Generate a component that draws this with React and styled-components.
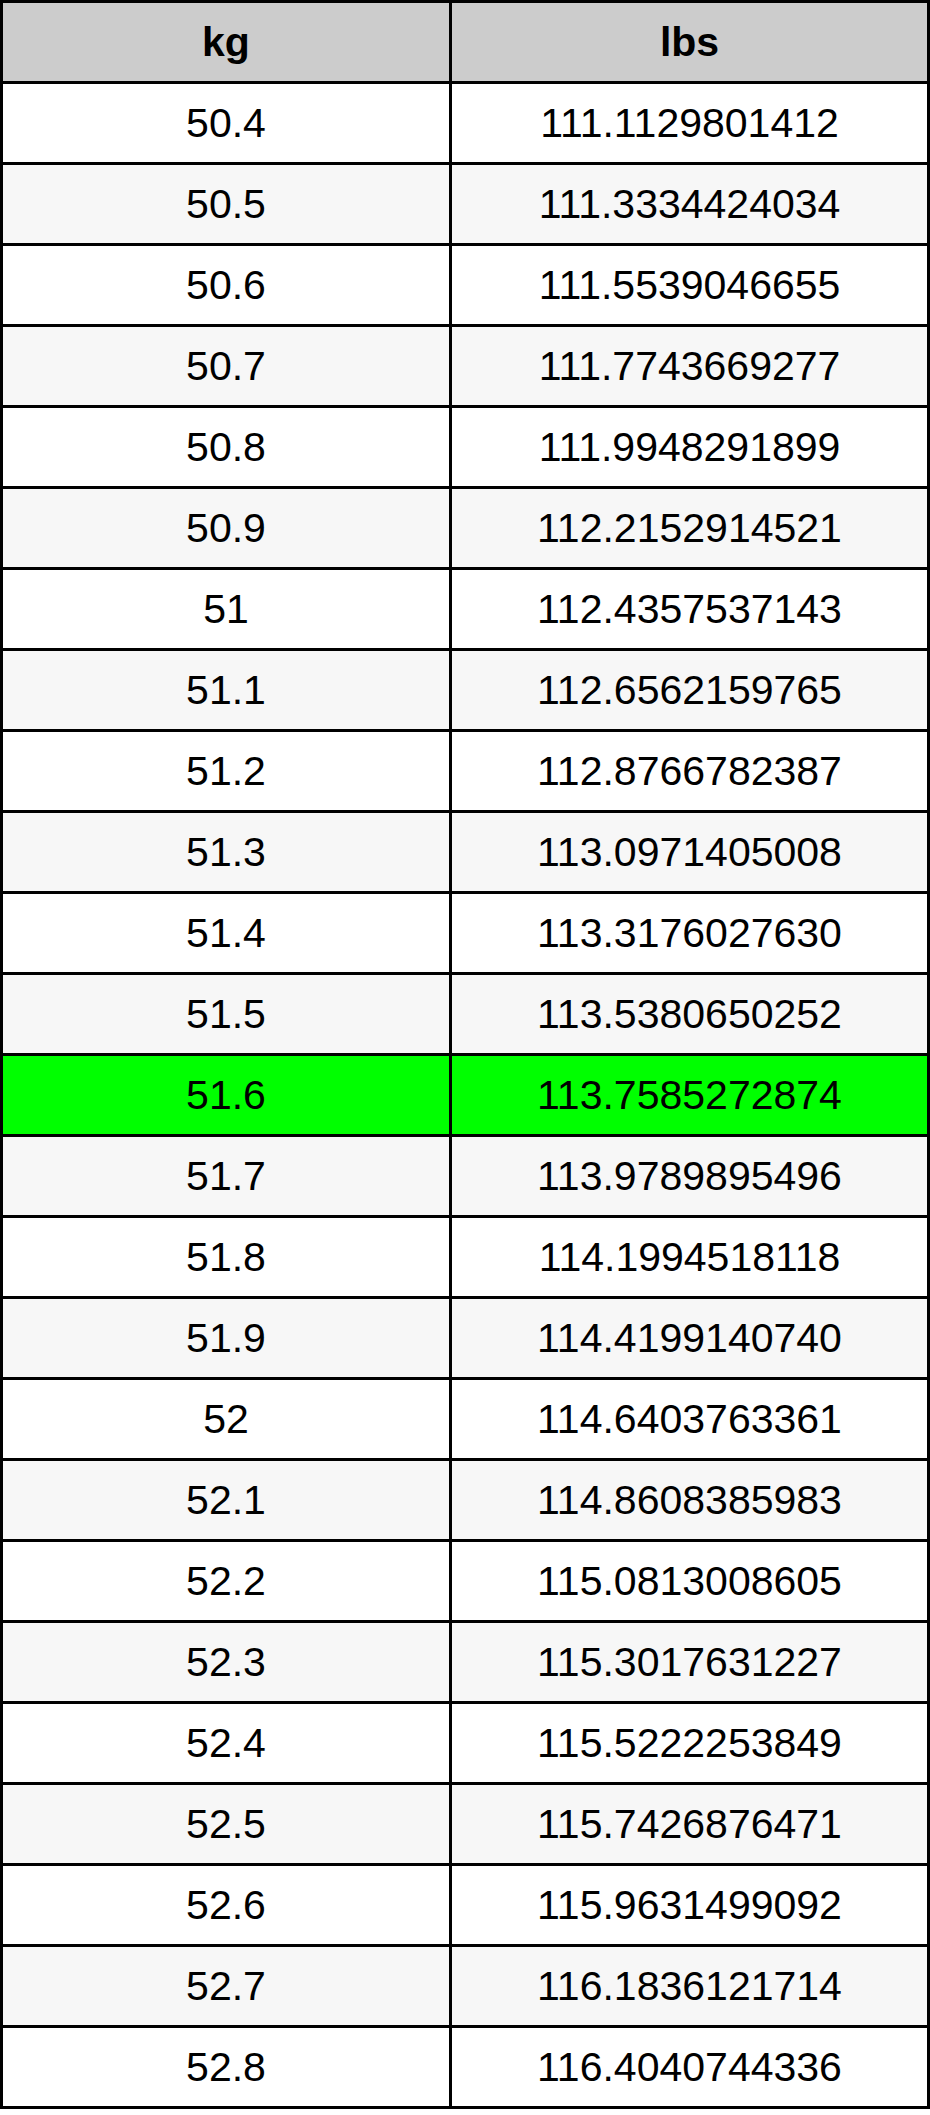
import React from "react";
import styled, { createGlobalStyle } from "styled-components";

const Global = createGlobalStyle`
  html, body { margin: 0; padding: 0; background: #ffffff; }
  body { font-family: "Liberation Sans", Arial, Helvetica, sans-serif; }
`;

const Table = styled.table`
  width: 930px;
  border-collapse: separate;
  border-spacing: 0;
  border-top: 3px solid #000;
  border-left: 3px solid #000;
  table-layout: fixed;
  font-family: "Liberation Sans", Arial, Helvetica, sans-serif;
  font-size: 41px;
  color: #000;
`;

const HeadCell = styled.th`
  box-sizing: border-box;
  height: 81px;
  padding: 0;
  width: ${(p) => p.$w}px;
  background: #cccccc;
  font-weight: bold;
  text-align: center;
  vertical-align: middle;
  border-right: 3px solid #000;
  border-bottom: 3px solid #000;
`;

const Row = styled.tr`
  background: ${(p) => (p.$hl ? "#00ff00" : p.$alt ? "#f7f7f7" : "#ffffff")};
`;

const Cell = styled.td`
  box-sizing: border-box;
  height: 81px;
  padding: 0;
  text-align: center;
  vertical-align: middle;
  border-right: 3px solid #000;
  border-bottom: 3px solid #000;
`;

const rows = [
  ["50.4", "111.1129801412"],
  ["50.5", "111.3334424034"],
  ["50.6", "111.5539046655"],
  ["50.7", "111.7743669277"],
  ["50.8", "111.9948291899"],
  ["50.9", "112.2152914521"],
  ["51", "112.4357537143"],
  ["51.1", "112.6562159765"],
  ["51.2", "112.8766782387"],
  ["51.3", "113.0971405008"],
  ["51.4", "113.3176027630"],
  ["51.5", "113.5380650252"],
  ["51.6", "113.7585272874"],
  ["51.7", "113.9789895496"],
  ["51.8", "114.1994518118"],
  ["51.9", "114.4199140740"],
  ["52", "114.6403763361"],
  ["52.1", "114.8608385983"],
  ["52.2", "115.0813008605"],
  ["52.3", "115.3017631227"],
  ["52.4", "115.5222253849"],
  ["52.5", "115.7426876471"],
  ["52.6", "115.9631499092"],
  ["52.7", "116.1836121714"],
  ["52.8", "116.4040744336"],
];

export default function App() {
  return (
    <>
      <Global />
      <Table>
        <thead>
          <tr>
            <HeadCell $w={449}>kg</HeadCell>
            <HeadCell $w={478}>lbs</HeadCell>
          </tr>
        </thead>
        <tbody>
          {rows.map(([kg, lbs], i) => (
            <Row key={kg} $alt={i % 2 === 1} $hl={kg === "51.6"}>
              <Cell>{kg}</Cell>
              <Cell>{lbs}</Cell>
            </Row>
          ))}
        </tbody>
      </Table>
    </>
  );
}
